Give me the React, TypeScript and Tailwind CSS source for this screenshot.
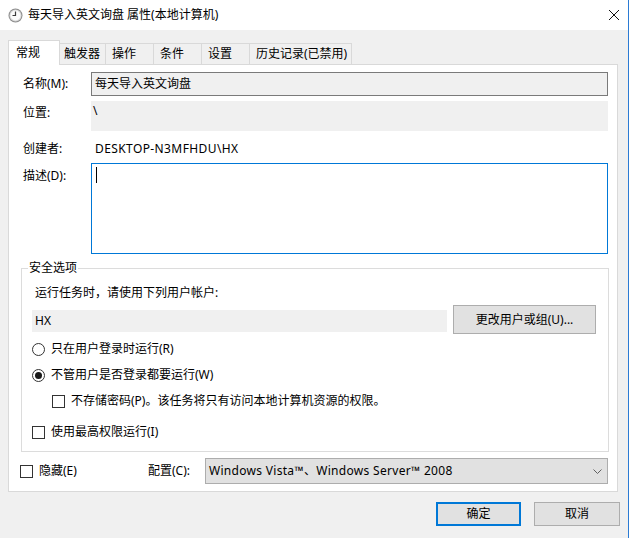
import React from 'react';

function ClockIcon() {
  return (
    <svg width="15" height="15" viewBox="0 0 15 15" className="ml-[8px] shrink-0">
      <circle cx="7.5" cy="7.5" r="7" fill="#8c8c8c" />
      <circle cx="7.5" cy="7.5" r="6" fill="#d8d8d8" />
      <circle cx="7.5" cy="7.5" r="5" fill="#fafafa" />
      <path d="M7.5 3.5V7.5H4.5" stroke="#3a3a3a" strokeWidth="1.2" fill="none" />
    </svg>
  );
}

function Check() {
  return <span className="block w-[13px] h-[13px] border border-[#333333] bg-white shrink-0" />;
}

function Radio({ checked }: { checked?: boolean }) {
  return (
    <span className="flex items-center justify-center w-[13px] h-[13px] rounded-full border border-[#333333] bg-white shrink-0">
      {checked && <span className="block w-[7px] h-[7px] rounded-full bg-[#1a1a1a]" />}
    </span>
  );
}

const tabs = [
  { label: '触发器', w: 'w-[46px] pl-[4px]' },
  { label: '操作', w: 'w-[48px] pl-[6px]' },
  { label: '条件', w: 'w-[48px] pl-[6px]' },
  { label: '设置', w: 'w-[48px] pl-[6px]' },
  { label: '历史记录(已禁用)', w: 'w-[102px] pl-[6px]' },
];

export default function App() {
  return (
    <div className="w-[630px] h-[538px] overflow-hidden bg-white font-['Noto_Sans','Noto_Sans_CJK_SC',sans-serif] text-[12px] leading-[16px] text-black">
      <div className="w-[629px] h-[538px] bg-[#f0f0f0] border-r border-[#2b7bd4] flex flex-col">
        {/* title bar */}
        <div className="h-[30px] bg-white flex items-center shrink-0">
          <ClockIcon />
          <span className="ml-[5px]">每天导入英文询盘 属性(本地计算机)</span>
          <svg width="10" height="10" viewBox="0 0 10 10" className="ml-auto mr-[9px]">
            <path d="M0 0L10 10M10 0L0 10" stroke="#111" strokeWidth="1" />
          </svg>
        </div>

        <div className="pt-[10px] pl-[8px]">
          {/* tabs */}
          <div className="relative z-10 flex items-start h-[24px]">
            <div className="w-[52px] h-[25px] bg-white border border-b-0 border-[#d9d9d9] pl-[7px] pt-[4px]">常规</div>
            {tabs.map(t => (
              <div key={t.label} className={`${t.w} h-[21px] mt-[3px] border border-l-0 border-b-0 border-[#d9d9d9] pt-[2px] whitespace-nowrap`}>
                {t.label}
              </div>
            ))}
          </div>

          {/* panel */}
          <div className="w-[610px] h-[428px] bg-white border border-[#d9d9d9] pt-[7px] pl-[12px]">
            <div className="flex items-center h-[24px]">
              <div className="w-[70px] pl-[2px]">名称(M):</div>
              <div className="w-[517px] h-[24px] border border-[#7a7a7a] bg-[#f0f0f0] pl-[3px] flex items-center">每天导入英文询盘</div>
            </div>

            <div className="flex mt-[5px]">
              <div className="w-[70px] pl-[2px] h-[24px] flex items-center">位置:</div>
              <div className="w-[517px] h-[30px] bg-[#f0f0f0] pl-[2px] pt-[2px]">\</div>
            </div>

            <div className="flex mt-[10px] h-[16px]">
              <div className="w-[70px] pl-[2px]">创建者:</div>
              <div className="pl-[4px] tracking-[0.4px]">DESKTOP-N3MFHDU\HX</div>
            </div>

            <div className="flex mt-[6px]">
              <div className="w-[70px] pl-[2px] pt-[5px]">描述(D):</div>
              <div className="w-[517px] h-[91px] border border-[#0078d7] bg-white pl-[4px] pt-[3px]">
                <span className="block w-px h-[16px] bg-black" />
              </div>
            </div>

            {/* security group */}
            <div className="relative mt-[14px] w-[588px] h-[184px] border border-[#dcdcdc] pl-[10px]">
              <div className="absolute left-[6px] -top-[9px] px-[1px] bg-white">安全选项</div>
              <div className="mt-[16px] pl-[3px]">运行任务时，请使用下列用户帐户:</div>
              <div className="flex items-start mt-[4px] h-[29px]">
                <div className="mt-[5px] w-[415px] h-[22px] bg-[#f0f0f0] pl-[3px] flex items-center">HX</div>
                <div className="ml-[6px] w-[143px] h-[29px] border border-[#adadad] bg-[#e1e1e1] flex items-center justify-center">更改用户或组(U)...</div>
              </div>
              <div className="flex items-center gap-[6px] mt-[7px] h-[16px]">
                <Radio />
                <span>只在用户登录时运行(R)</span>
              </div>
              <div className="flex items-center gap-[6px] mt-[10px] h-[16px]">
                <Radio checked />
                <span>不管用户是否登录都要运行(W)</span>
              </div>
              <div className="flex items-center gap-[6px] mt-[10px] h-[16px] pl-[20px]">
                <Check />
                <span>不存储密码(P)。该任务将只有访问本地计算机资源的权限。</span>
              </div>
              <div className="flex items-center gap-[6px] mt-[15px] h-[16px]">
                <Check />
                <span>使用最高权限运行(I)</span>
              </div>
            </div>

            {/* bottom row */}
            <div className="flex items-center mt-[6px] h-[26px] -ml-px">
              <div className="w-[128px] flex items-center gap-[6px]">
                <Check />
                <span>隐藏(E)</span>
              </div>
              <div className="w-[57px]">配置(C):</div>
              <div className="w-[403px] h-[26px] border border-[#adadad] bg-[#e1e1e1] pl-[3px] flex items-center">
                <span className="tracking-[0.3px]">Windows Vista™、Windows Server™ 2008</span>
                <svg width="9" height="5" viewBox="0 0 9 5" className="ml-auto mr-[5px]">
                  <path d="M0.5 0.5L4.5 4.5L8.5 0.5" stroke="#606060" fill="none" />
                </svg>
              </div>
            </div>
          </div>

          {/* dialog buttons */}
          <div className="flex mt-[10px]">
            <div className="ml-[428px] w-[85px] h-[24px] border-2 border-[#0078d7] bg-[#e1e1e1] flex items-center justify-center">确定</div>
            <div className="ml-[13px] w-[86px] h-[24px] border border-[#adadad] bg-[#e1e1e1] flex items-center justify-center">取消</div>
          </div>
        </div>
      </div>
    </div>
  );
}
